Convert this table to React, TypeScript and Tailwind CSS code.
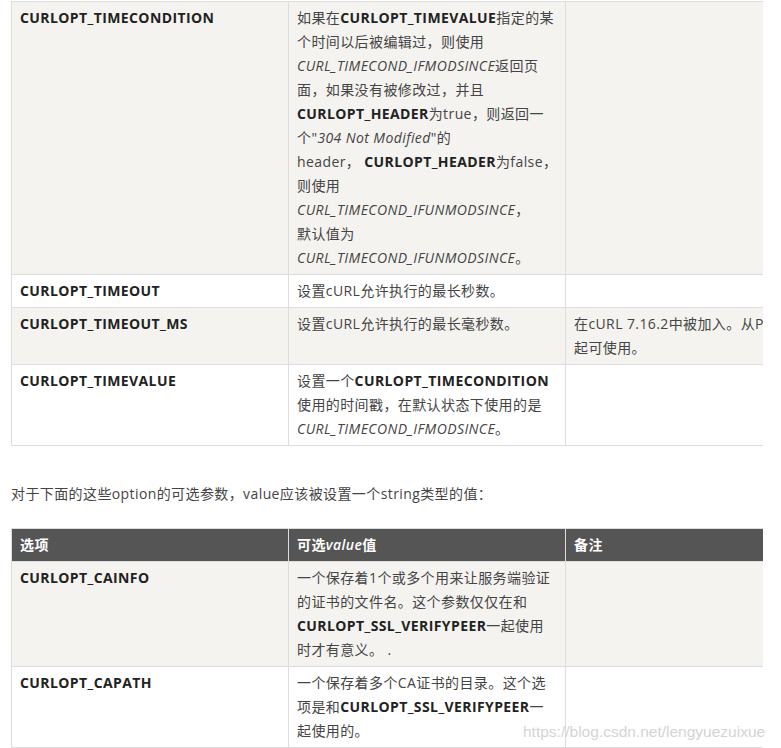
const font = { fontFamily: '"Open Sans", "Noto Sans CJK SC", sans-serif' };

function B({ children }: { children: React.ReactNode }) {
  return <b className="font-bold text-[#222]">{children}</b>;
}

function I({ children }: { children: React.ReactNode }) {
  return <i className="italic">{children}</i>;
}

type Row = { name: string; value: React.ReactNode; note?: React.ReactNode };

const timeRows: Row[] = [
  {
    name: "CURLOPT_TIMECONDITION",
    value: (
      <>
        如果在<B>CURLOPT_TIMEVALUE</B>指定的某<br />
        个时间以后被编辑过，则使用<br />
        <I>CURL_TIMECOND_IFMODSINCE</I>返回页<br />
        面，如果没有被修改过，并且<br />
        <B>CURLOPT_HEADER</B>为true，则返回一<br />
        个"<I>304 Not Modified</I>"的<br />
        header， <B>CURLOPT_HEADER</B>为false，<br />
        则使用<br />
        <I>CURL_TIMECOND_IFUNMODSINCE</I>，<br />
        默认值为<br />
        <I>CURL_TIMECOND_IFUNMODSINCE</I>。
      </>
    ),
  },
  { name: "CURLOPT_TIMEOUT", value: "设置cURL允许执行的最长秒数。" },
  {
    name: "CURLOPT_TIMEOUT_MS",
    value: "设置cURL允许执行的最长毫秒数。",
    note: (
      <>
        在cURL 7.16.2中被加入。从PHP 5.2.3<br />
        起可使用。
      </>
    ),
  },
  {
    name: "CURLOPT_TIMEVALUE",
    value: (
      <>
        设置一个<B>CURLOPT_TIMECONDITION</B><br />
        使用的时间戳，在默认状态下使用的是<br />
        <I>CURL_TIMECOND_IFMODSINCE</I>。
      </>
    ),
  },
];

const stringRows: Row[] = [
  {
    name: "CURLOPT_CAINFO",
    value: (
      <>
        一个保存着1个或多个用来让服务端验证<br />
        的证书的文件名。这个参数仅仅在和<br />
        <B>CURLOPT_SSL_VERIFYPEER</B>一起使用<br />
        时才有意义。 .
      </>
    ),
  },
  {
    name: "CURLOPT_CAPATH",
    value: (
      <>
        一个保存着多个CA证书的目录。这个选<br />
        项是和<B>CURLOPT_SSL_VERIFYPEER</B>一<br />
        起使用的。
      </>
    ),
  },
];

function OptionTable({ rows, header }: { rows: Row[]; header?: boolean }) {
  return (
    <div className="ml-[11px] w-[752px] overflow-hidden">
      <table className="w-[831px] table-fixed border-collapse text-[14px] leading-6 tracking-[0.4px] text-[#444]">
        <colgroup>
          <col className="w-[277px]" />
          <col className="w-[277px]" />
          <col className="w-[277px]" />
        </colgroup>
        {header && (
          <thead>
            <tr className="bg-[#555555] text-left text-white">
              <th className="border border-[#dddddd] px-2 py-1 font-semibold">选项</th>
              <th className="border border-[#dddddd] px-2 py-1 font-semibold">
                可选<i>value</i>值
              </th>
              <th className="border border-[#dddddd] px-2 py-1 font-semibold">备注</th>
            </tr>
          </thead>
        )}
        <tbody>
          {rows.map((row, i) => (
            <tr key={row.name} className={i % 2 === 0 ? "bg-[#f4f3f0]" : "bg-white"}>
              <td className="border border-[#dddddd] px-2 py-1 align-top">
                <B>{row.name}</B>
              </td>
              <td className="whitespace-nowrap border border-[#dddddd] px-2 py-1 align-top">{row.value}</td>
              <td className="whitespace-nowrap border border-[#dddddd] px-2 py-1 align-top">{row.note}</td>
            </tr>
          ))}
        </tbody>
      </table>
    </div>
  );
}

export default function App() {
  return (
    <div className="relative h-[748px] w-[781px] overflow-hidden bg-white pt-[1px]" style={font}>
      <OptionTable rows={timeRows} />
      <p className="mb-[22px] mt-9 pl-[11px] text-[14px] leading-6 tracking-[0.4px] text-[#444]">
        对于下面的这些option的可选参数，value应该被设置一个string类型的值：
      </p>
      <OptionTable rows={stringRows} header />
      <div
        className="absolute left-[523px] top-[720px] text-[15.5px] text-[#d4d4d4]"
        style={{ fontFamily: '"Liberation Sans", Arial, sans-serif' }}
      >
        https://blog.csdn.net/lengyuezuixue
      </div>
    </div>
  );
}
